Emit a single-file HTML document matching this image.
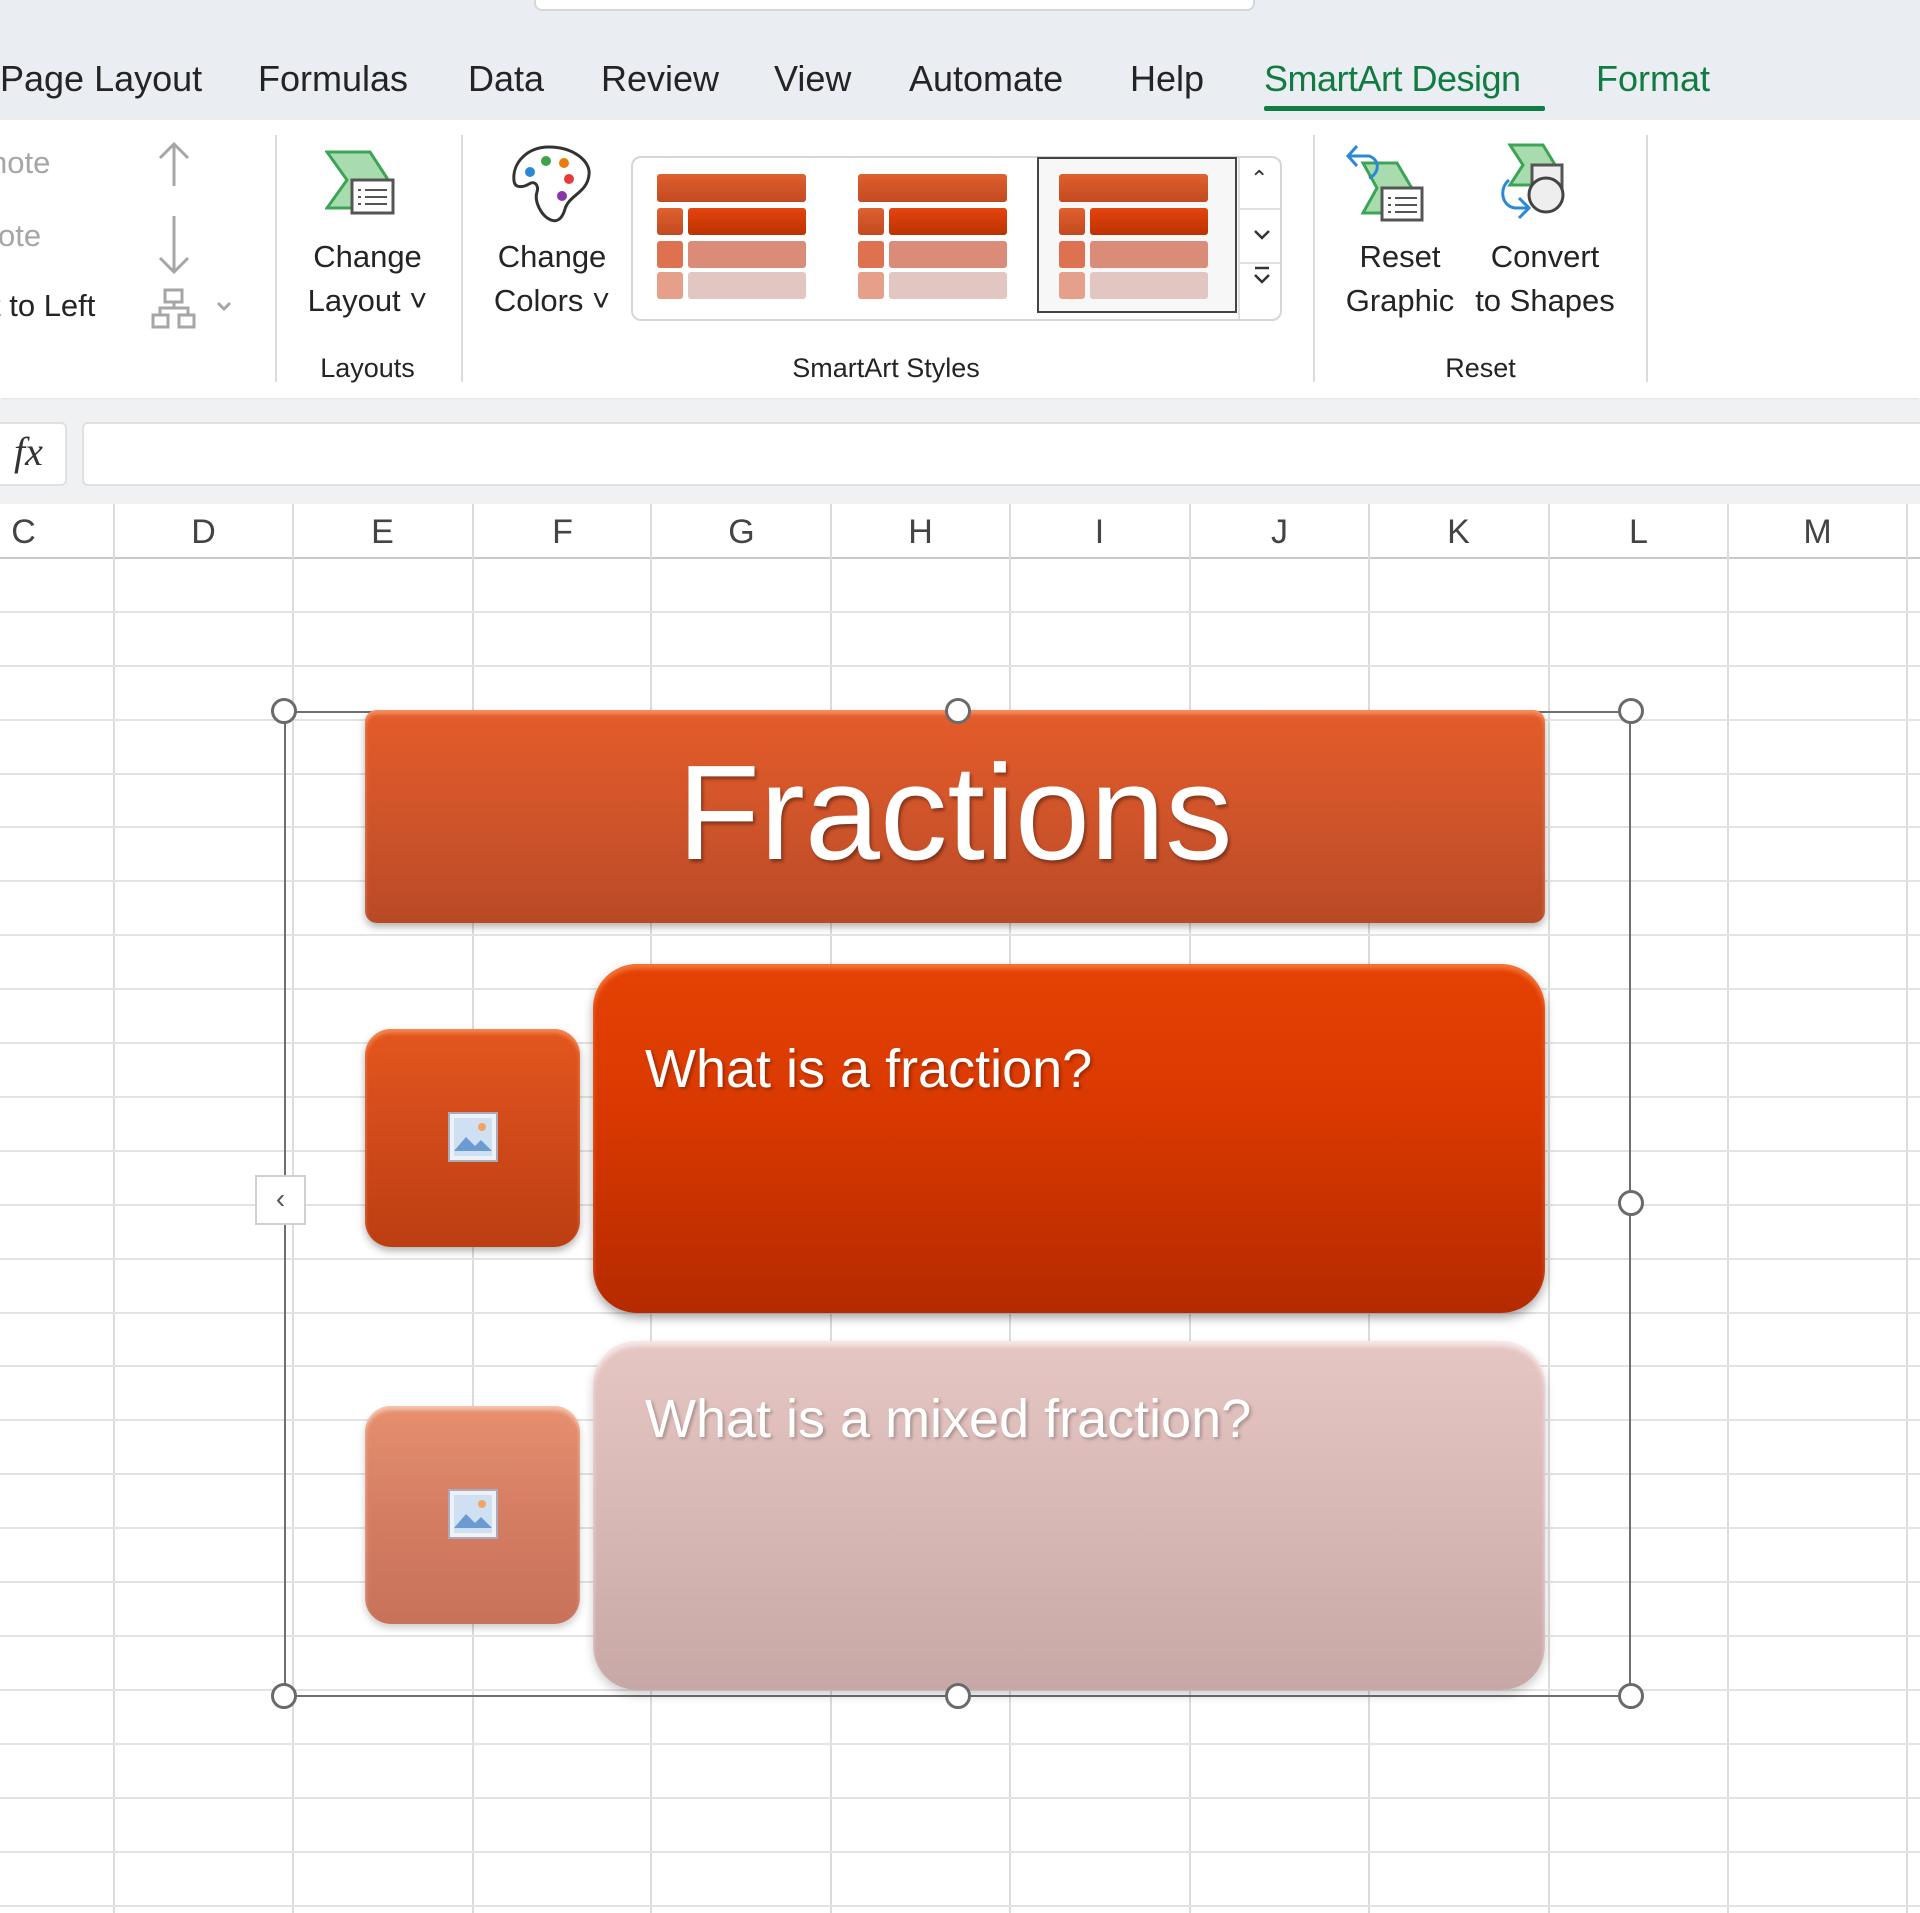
<!DOCTYPE html>
<html><head><meta charset="utf-8"><style>
*{margin:0;padding:0;box-sizing:border-box}
body{width:1920px;height:1913px;position:relative;overflow:hidden;background:#fff;font-family:"Liberation Sans",sans-serif;color:#242424}
.a{position:absolute;white-space:nowrap}
.tab{position:absolute;top:58px;font-size:36px;color:#242424}
.rb{font-size:31px;text-align:center;line-height:44px}
.gl{font-size:27px;top:353px}
.sep{position:absolute;top:135px;width:2px;height:247px;background:#dcdcdc}
.col{position:absolute;top:506px;font-size:34px;color:#444;width:179px;text-align:center;line-height:52px}
.h{position:absolute;width:26px;height:26px;border-radius:50%;border:3px solid #6a6a6a;background:#fff}
</style></head><body>
<div class="a" style="left:0;top:0;width:1920px;height:120px;background:#eaedf1"></div>
<div class="a" style="left:534px;top:-20px;width:721px;height:31px;background:#fff;border:2px solid #d4d7db;border-radius:8px"></div>
<div class="tab" style="left:0">Page Layout</div>
<div class="tab" style="left:258px">Formulas</div>
<div class="tab" style="left:468px">Data</div>
<div class="tab" style="left:601px">Review</div>
<div class="tab" style="left:774px">View</div>
<div class="tab" style="left:909px">Automate</div>
<div class="tab" style="left:1130px">Help</div>
<div class="tab" style="left:1264px;color:#107c41;letter-spacing:-0.5px">SmartArt Design</div>
<div class="a" style="left:1264px;top:106px;width:281px;height:5px;background:#107c41;border-radius:2px"></div>
<div class="tab" style="left:1596px;color:#107c41">Format</div>
<div class="a" style="left:0;top:120px;width:1920px;height:278px;background:#fff;box-shadow:0 2px 3px rgba(0,0,0,.12)"></div>
<div class="a" style="left:-10px;top:145px;font-size:31px;color:#a6a6a6">note</div>
<div class="a" style="left:-2px;top:218px;font-size:31px;color:#a6a6a6">ote</div>
<div class="a" style="left:-8px;top:288px;font-size:31px;color:#242424">t to Left</div>
<svg class="a" style="left:150px;top:140px" width="90" height="190" viewBox="0 0 90 190">
<g stroke="#a6a6a6" stroke-width="3" fill="none"><path d="M24 46V4M10 18L24 4L38 18"/><path d="M24 76v56M10 118l14 14l14-14"/>
<rect x="15" y="150" width="17" height="12"/><rect x="3" y="175" width="15" height="12"/><rect x="29" y="175" width="15" height="12"/><path d="M24 162v6M10 175v-7h28v7"/><path d="M68 163l6 6l6-6"/></g></svg>
<div class="sep" style="left:275px"></div>
<svg class="a" style="left:325px;top:150px" width="85" height="70" viewBox="0 0 85 70"><path d="M2 2H45L62 28L42 58H2L22 30Z" fill="#a8dcae" stroke="#3ba456" stroke-width="3"/><rect x="27" y="30" width="41" height="33" fill="#fff" stroke="#555" stroke-width="3"/><path d="M33 40h3M40 40h22M33 47h3M40 47h22M33 54h3M40 54h22" stroke="#555" stroke-width="2"/></svg>
<div class="a rb" style="left:295px;top:235px;width:145px">Change<br>Layout ˅</div>
<div class="a gl" style="left:295px;width:145px;text-align:center">Layouts</div>
<div class="sep" style="left:461px"></div>
<svg class="a" style="left:509px;top:143px" width="85" height="85" viewBox="0 0 85 85"><path d="M40 4C18 4 3 20 5 38c1 8 10 6 15 3c6-4 10 2 8 8c-3 9 4 24 14 28c8 3 12-4 14-11c4-14 22-16 24-34C82 18 64 4 40 4Z" fill="#fff" stroke="#333" stroke-width="3"/><circle cx="21" cy="29" r="5" fill="#2b88d8"/><circle cx="37" cy="18" r="5" fill="#3fa34d"/><circle cx="55" cy="20" r="5" fill="#e87d0d"/><circle cx="60" cy="36" r="5" fill="#e83a3a"/><circle cx="53" cy="53" r="5" fill="#8b35a8"/></svg>
<div class="a rb" style="left:478px;top:235px;width:148px">Change<br>Colors ˅</div>
<div class="a" style="left:631px;top:156px;width:651px;height:165px;border:2px solid #d6d6d6;border-radius:10px;background:#fff"></div>
<div class="a" style="left:1238px;top:158px;width:2px;height:161px;background:#e0e0e0"></div>
<div class="a" style="left:1240px;top:208px;width:40px;height:2px;background:#e0e0e0"></div>
<div class="a" style="left:1240px;top:262px;width:40px;height:2px;background:#e0e0e0"></div>
<div class="a" style="left:1250px;top:166px;font-size:22px;color:#333">⌃</div>
<svg class="a" style="left:1252px;top:228px" width="20" height="60" viewBox="0 0 20 60"><path d="M3 3l7 7l7-7M3 47l7 7l7-7M3 40h14" stroke="#333" stroke-width="2.5" fill="none"/></svg>
<div class="a" style="left:1037px;top:157px;width:200px;height:156px;border:2px solid #444;background:#f7f7f7"></div>
<svg class="a" style="left:657px;top:170px" width="560" height="135" viewBox="0 0 560 135">
<defs><linearGradient id="o1" x1="0" y1="0" x2="0" y2="1"><stop offset="0" stop-color="#e06030"/><stop offset="1" stop-color="#c24a20"/></linearGradient>
<linearGradient id="o2" x1="0" y1="0" x2="0" y2="1"><stop offset="0" stop-color="#e54410"/><stop offset="1" stop-color="#bb3300"/></linearGradient></defs>
<g id="th"><rect x="0" y="4" width="149" height="28" rx="3" fill="url(#o1)"/><rect x="0" y="38" width="26" height="27" rx="3" fill="url(#o1)"/><rect x="31" y="38" width="118" height="27" rx="3" fill="url(#o2)"/><rect x="0" y="71" width="26" height="27" rx="3" fill="#de7250"/><rect x="31" y="71" width="118" height="27" rx="3" fill="#db8c78"/><rect x="0" y="102" width="26" height="27" rx="3" fill="#e6a08a"/><rect x="31" y="102" width="118" height="27" rx="3" fill="#e2c6c2"/></g>
<use href="#th" x="201"/><use href="#th" x="402"/></svg>
<div class="a gl" style="left:631px;width:510px;text-align:center">SmartArt Styles</div>
<div class="sep" style="left:1313px"></div>
<svg class="a" style="left:1345px;top:138px" width="90" height="90" viewBox="0 0 90 90"><path d="M18 25H52L68 52L52 75H18L32 50Z" fill="#a8dcae" stroke="#3ba456" stroke-width="3"/><rect x="37" y="50" width="40" height="32" fill="#fff" stroke="#555" stroke-width="3"/><path d="M43 60h3M50 60h22M43 67h3M50 67h22M43 74h3M50 74h22" stroke="#555" stroke-width="2"/><path d="M24 40c10-4 12-18 0-22H4M12 8L3 18l9 10" stroke="#2b88d8" stroke-width="3" fill="none"/></svg>
<div class="a rb" style="left:1335px;top:235px;width:130px">Reset<br>Graphic</div>
<svg class="a" style="left:1495px;top:140px" width="85" height="90" viewBox="0 0 85 90"><path d="M15 5H48L62 28L48 45H15L28 25Z" fill="#a8dcae" stroke="#3ba456" stroke-width="3"/><rect x="37" y="25" width="30" height="30" fill="#eee" stroke="#555" stroke-width="3"/><circle cx="51" cy="55" r="17" fill="#eee" stroke="#444" stroke-width="3"/><path d="M14 40c-10 8-8 26 6 28h12M24 58l10 10l-10 10" stroke="#2b88d8" stroke-width="3" fill="none"/></svg>
<div class="a rb" style="left:1465px;top:235px;width:160px">Convert<br>to Shapes</div>
<div class="a gl" style="left:1314px;width:333px;text-align:center">Reset</div>
<div class="sep" style="left:1646px"></div>
<div class="a" style="left:0;top:400px;width:1920px;height:104px;background:#f0f1f3"></div>
<div class="a" style="left:-10px;top:422px;width:77px;height:64px;background:#fff;border:2px solid #e0e0e0;border-radius:6px"></div>
<div class="a" style="left:14px;top:428px;font-family:'Liberation Serif',serif;font-style:italic;font-size:40px;color:#333">fx</div>
<div class="a" style="left:82px;top:422px;width:1850px;height:64px;background:#fff;border:2px solid #e0e0e0;border-radius:6px"></div>
<div class="a" style="left:0;top:504px;width:1920px;height:55px;background:#fff;border-bottom:2px solid #c8c8c8"></div>
<svg class="a" style="left:0;top:504px" width="1920" height="1409">
<path d="M114 0V1409M293 0V1409M473 0V1409M651 0V1409M831 0V1409M1010 0V1409M1190 0V1409M1369 0V1409M1549 0V1409M1728 0V1409M1907 0V1409" stroke="#dcdcdc" stroke-width="2"/>
<path d="M0 108H1920M0 162H1920M0 216H1920M0 270H1920M0 323H1920M0 377H1920M0 431H1920M0 485H1920M0 539H1920M0 593H1920M0 647H1920M0 701H1920M0 755H1920M0 809H1920M0 862H1920M0 916H1920M0 970H1920M0 1024H1920M0 1078H1920M0 1132H1920M0 1186H1920M0 1240H1920M0 1294H1920M0 1348H1920M0 1402H1920" stroke="#e3e3e3" stroke-width="2"/>
</svg>
<div class="col" style="left:-66px">C</div>
<div class="col" style="left:114px">D</div>
<div class="col" style="left:293px">E</div>
<div class="col" style="left:473px">F</div>
<div class="col" style="left:652px">G</div>
<div class="col" style="left:831px">H</div>
<div class="col" style="left:1010px">I</div>
<div class="col" style="left:1190px">J</div>
<div class="col" style="left:1369px">K</div>
<div class="col" style="left:1549px">L</div>
<div class="col" style="left:1728px">M</div>
<div class="a" style="left:284px;top:711px;width:1347px;height:986px;border:2px solid #6f6f6f"></div>
<div class="a" style="left:255px;top:1175px;width:51px;height:50px;background:#fff;border:2px solid #d0d0d0;font-size:28px;color:#555;text-align:center;line-height:44px">‹</div>
<div class="a" style="left:365px;top:710px;width:1180px;height:213px;border-radius:12px;background:linear-gradient(#e45c2a,#d0542a 50%,#b84a26);box-shadow:0 4px 8px rgba(0,0,0,.3),inset 0 4px 4px rgba(255,180,140,.6)"></div>
<div class="a" style="left:365px;top:738px;width:1180px;text-align:center;font-size:135px;color:#fff;text-shadow:2px 3px 3px rgba(0,0,0,.35);line-height:150px">Fractions</div>
<div class="a" style="left:365px;top:1029px;width:215px;height:218px;border-radius:26px;background:linear-gradient(#e4561e,#d04a1a 50%,#bc3e12);box-shadow:0 4px 8px rgba(0,0,0,.3),inset 0 4px 4px rgba(255,170,120,.6)"></div>
<div class="a" style="left:593px;top:964px;width:952px;height:349px;border-radius:44px;background:linear-gradient(#e54204,#d83800 45%,#b52a00);box-shadow:0 5px 10px rgba(0,0,0,.35),inset 0 5px 5px rgba(255,150,90,.6)"></div>
<div class="a" style="left:645px;top:1038px;font-size:54px;color:#fff;text-shadow:2px 2px 3px rgba(0,0,0,.3)">What is a fraction?</div>
<div class="a" style="left:365px;top:1406px;width:215px;height:218px;border-radius:26px;background:linear-gradient(#e6906f,#d47d63 50%,#c8725a);box-shadow:0 4px 8px rgba(0,0,0,.2),inset 0 4px 4px rgba(255,220,200,.7)"></div>
<div class="a" style="left:593px;top:1341px;width:952px;height:349px;border-radius:44px;background:linear-gradient(#e6c6c3,#d8b8b5 50%,#c8a8a6);box-shadow:0 5px 10px rgba(0,0,0,.2),inset 0 5px 5px rgba(255,255,255,.6)"></div>
<div class="a" style="left:645px;top:1388px;font-size:54px;color:#fff;text-shadow:2px 2px 3px rgba(0,0,0,.25)">What is a mixed fraction?</div>
<svg class="a" style="left:447px;top:1111px" width="52" height="52" viewBox="0 0 52 52"><rect x="2" y="2" width="48" height="48" fill="#eef2f7" stroke="#aab" stroke-width="2"/><rect x="7" y="7" width="38" height="38" fill="#cfe0f2"/><path d="M7 40l12-14l9 9l6-6l11 11z" fill="#6b9bd1"/><circle cx="35" cy="16" r="4" fill="#f4a460"/></svg>
<svg class="a" style="left:447px;top:1488px" width="52" height="52" viewBox="0 0 52 52"><rect x="2" y="2" width="48" height="48" fill="#eef2f7" stroke="#aab" stroke-width="2"/><rect x="7" y="7" width="38" height="38" fill="#cfe0f2"/><path d="M7 40l12-14l9 9l6-6l11 11z" fill="#6b9bd1"/><circle cx="35" cy="16" r="4" fill="#f4a460"/></svg>
<div class="h" style="left:271px;top:698px"></div>
<div class="h" style="left:945px;top:698px"></div>
<div class="h" style="left:1618px;top:698px"></div>
<div class="h" style="left:1618px;top:1190px"></div>
<div class="h" style="left:271px;top:1683px"></div>
<div class="h" style="left:945px;top:1683px"></div>
<div class="h" style="left:1618px;top:1683px"></div>
</body></html>
